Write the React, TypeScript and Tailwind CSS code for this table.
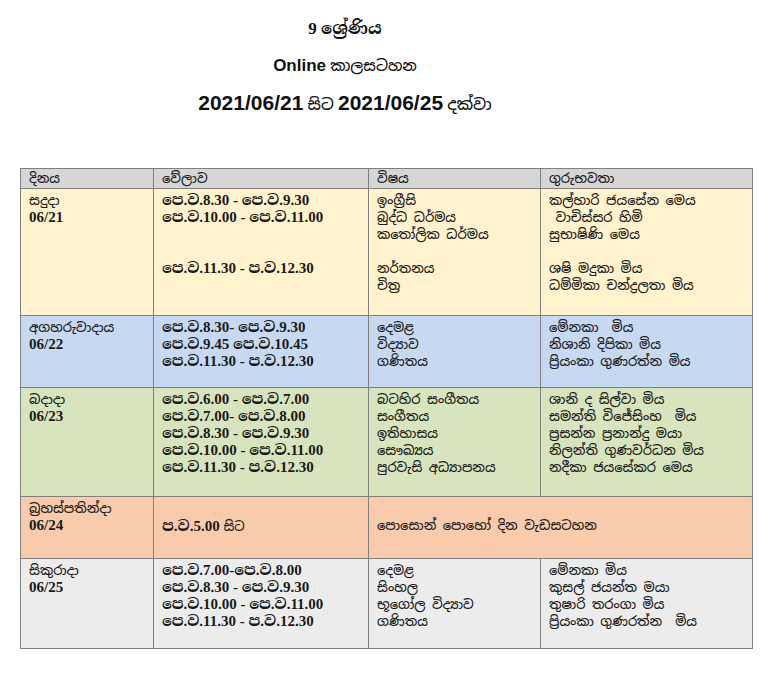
import React from 'react';

type Row = {
  day: string;
  date: string;
  times: string[];
  subjects: string[];
  teachers: string[];
  bg: string;
  h: string;
};

const sinhala = "font-['Noto_Sans_Sinhala','Iskoola_Pota','Noto_Sans',sans-serif] font-medium";
const serifBold = "font-['Liberation_Serif','Noto_Serif_Sinhala','Noto_Sans_Sinhala',serif] font-bold";

const rows: Row[] = [
  {
    day: 'සදුදා',
    date: '06/21',
    times: ['පෙ.ව.8.30 - පෙ.ව.9.30', 'පෙ.ව.10.00 - පෙ.ව.11.00', '', '', 'පෙ.ව.11.30 - ප.ව.12.30'],
    subjects: ['ඉංග්‍රීසි', 'බුද්ධ ධර්මය', 'කතෝලික ධර්මය', '', 'නර්තනය', 'චිත්‍ර'],
    teachers: ['කල්හාරි ජයසේන මෙය', '\u00a0වාචිස්සර හිමි', 'සුභාෂිණි මෙය', '', 'ශෂි මදුකා මිය', 'ධම්මිකා චන්ද්‍රලතා මිය'],
    bg: 'bg-[#fff2cc]',
    h: 'h-[127px]',
  },
  {
    day: 'අගහරුවාදාය',
    date: '06/22',
    times: ['පෙ.ව.8.30- පෙ.ව.9.30', 'පෙ.ව.9.45 පෙ.ව.10.45', 'පෙ.ව.11.30 - ප.ව.12.30'],
    subjects: ['දෙමළ', 'විද්‍යාව', 'ගණිතය'],
    teachers: ['මේනකා\u00a0 මිය', 'නිශානි දිපිකා මිය', 'ප්‍රියංකා ගුණරත්න මිය'],
    bg: 'bg-[#c6d9f1]',
    h: 'h-[72px]',
  },
  {
    day: 'බදාදා',
    date: '06/23',
    times: [
      'පෙ.ව.6.00 - පෙ.ව.7.00',
      'පෙ.ව.7.00- පෙ.ව.8.00',
      'පෙ.ව.8.30 - පෙ.ව.9.30',
      'පෙ.ව.10.00 - පෙ.ව.11.00',
      'පෙ.ව.11.30 - ප.ව.12.30',
    ],
    subjects: ['බටහිර සංගීතය', 'සංගීතය', 'ඉතිහාසය', 'සෞඛ්‍යය', 'පුරවැසි අධ්‍යාපනය'],
    teachers: ['ශානි ද සිල්වා මිය', 'සමන්ති විජේසිංහ\u00a0 මිය', 'ප්‍රසන්න ප්‍රනාන්දු මයා', 'නිලන්ති ගුණවර්ධන මිය', 'නදීකා ජයසේකර මෙය'],
    bg: 'bg-[#d7e4bd]',
    h: 'h-[109px]',
  },
];

const friday: Row = {
  day: 'සිකුරාදා',
  date: '06/25',
  times: ['පෙ.ව.7.00-පෙ.ව.8.00', 'පෙ.ව.8.30 - පෙ.ව.9.30', 'පෙ.ව.10.00 - පෙ.ව.11.00', 'පෙ.ව.11.30 - ප.ව.12.30'],
  subjects: ['දෙමළ', 'සිංහල', 'භූගෝල විද්‍යාව', 'ගණිතය'],
  teachers: ['මේනකා මිය', 'කුසල් ජයන්ත මයා', 'තුෂාරි තරංගා මිය', 'ප්‍රියංකා ගුණරත්න\u00a0 මිය'],
  bg: 'bg-[#ececec]',
  h: 'h-[90px]',
};

const cell = 'border border-[#7f7f7f] align-top pl-2 pt-[3px] leading-[17px]';

const Lines = ({ items, className }: { items: string[]; className: string }) => (
  <div className={className}>
    {items.map((t, i) => (
      <div key={i} className="h-[17px] whitespace-pre">
        {t || '\u00a0'}
      </div>
    ))}
  </div>
);

const DayRow = ({ r }: { r: Row }) => (
  <tr className={`${r.bg} ${r.h}`}>
    <td className={cell}>
      <div className={`${sinhala} text-[13px] text-[#1a1a1a]`}>{r.day}</div>
      <div className={`${serifBold} text-[15px] text-[#1a1a1a]`}>{r.date}</div>
    </td>
    <td className={cell}>
      <Lines items={r.times} className={`${serifBold} text-[15px] text-[#1a1a1a]`} />
    </td>
    <td className={cell}>
      <Lines items={r.subjects} className={`${sinhala} text-[13px] text-[#1a1a1a]`} />
    </td>
    <td className={cell}>
      <Lines items={r.teachers} className={`${sinhala} text-[13px] text-[#1a1a1a]`} />
    </td>
  </tr>
);

export default function App() {
  return (
    <div className="w-[768px] h-[695px] bg-white overflow-hidden">
      <div className="pr-[78px] pt-[16px] text-center text-[#111]">
        <div className={`${serifBold} text-[17px] leading-[26px]`}>9 ශ්‍රේණිය</div>
        <div className="mt-[10px] leading-[26px]">
          <span className="font-['Liberation_Sans',sans-serif] font-bold text-[17px]">Online</span>{' '}
          <span className={`${sinhala} text-[15px]`}>කාලසටහන</span>
        </div>
        <div className="mt-[10px] leading-[28px]">
          <span className="font-['Liberation_Sans',sans-serif] font-bold text-[21px]">2021/06/21</span>{' '}
          <span className={`${sinhala} text-[16px]`}>සිට</span>{' '}
          <span className="font-['Liberation_Sans',sans-serif] font-bold text-[21px]">2021/06/25</span>{' '}
          <span className={`${sinhala} text-[16px]`}>දක්වා</span>
        </div>
      </div>

      <div className="pl-[20px] pt-[49px]">
        <table className="border-collapse table-fixed w-[732px]">
          <colgroup>
            <col className="w-[133px]" />
            <col className="w-[215px]" />
            <col className="w-[172px]" />
            <col className="w-[212px]" />
          </colgroup>
          <thead>
            <tr className="bg-[#d6d6d6] h-[20px]">
              {['දිනය', 'වේලාව', 'විෂය', 'ගුරුභවතා'].map((h) => (
                <th
                  key={h}
                  className={`border border-[#7f7f7f] text-left pl-2 leading-[17px] ${sinhala} text-[13px] text-[#1a1a1a]`}
                >
                  {h}
                </th>
              ))}
            </tr>
          </thead>
          <tbody>
            {rows.map((r) => (
              <DayRow key={r.date} r={r} />
            ))}
            <tr className="bg-[#f8cbad] h-[62px]">
              <td className={cell}>
                <div className={`${sinhala} text-[13px] text-[#1a1a1a]`}>බ්‍රහස්පතින්දා</div>
                <div className={`${serifBold} text-[15px] text-[#1a1a1a]`}>06/24</div>
              </td>
              <td className="border border-[#7f7f7f] align-middle pl-2 pb-[4px] leading-[17px]">
                <span className={`${serifBold} text-[15px] text-[#1a1a1a]`}>ප.ව.5.00 </span>
                <span className={`${sinhala} text-[13px] text-[#1a1a1a]`}>සිට</span>
              </td>
              <td
                colSpan={2}
                className={`border border-[#7f7f7f] align-middle pl-2 pb-[4px] leading-[17px] ${sinhala} text-[13px] text-[#1a1a1a]`}
              >
                පොසොන් පොහෝ දින වැඩසටහන
              </td>
            </tr>
            <DayRow r={friday} />
          </tbody>
        </table>
      </div>
    </div>
  );
}
